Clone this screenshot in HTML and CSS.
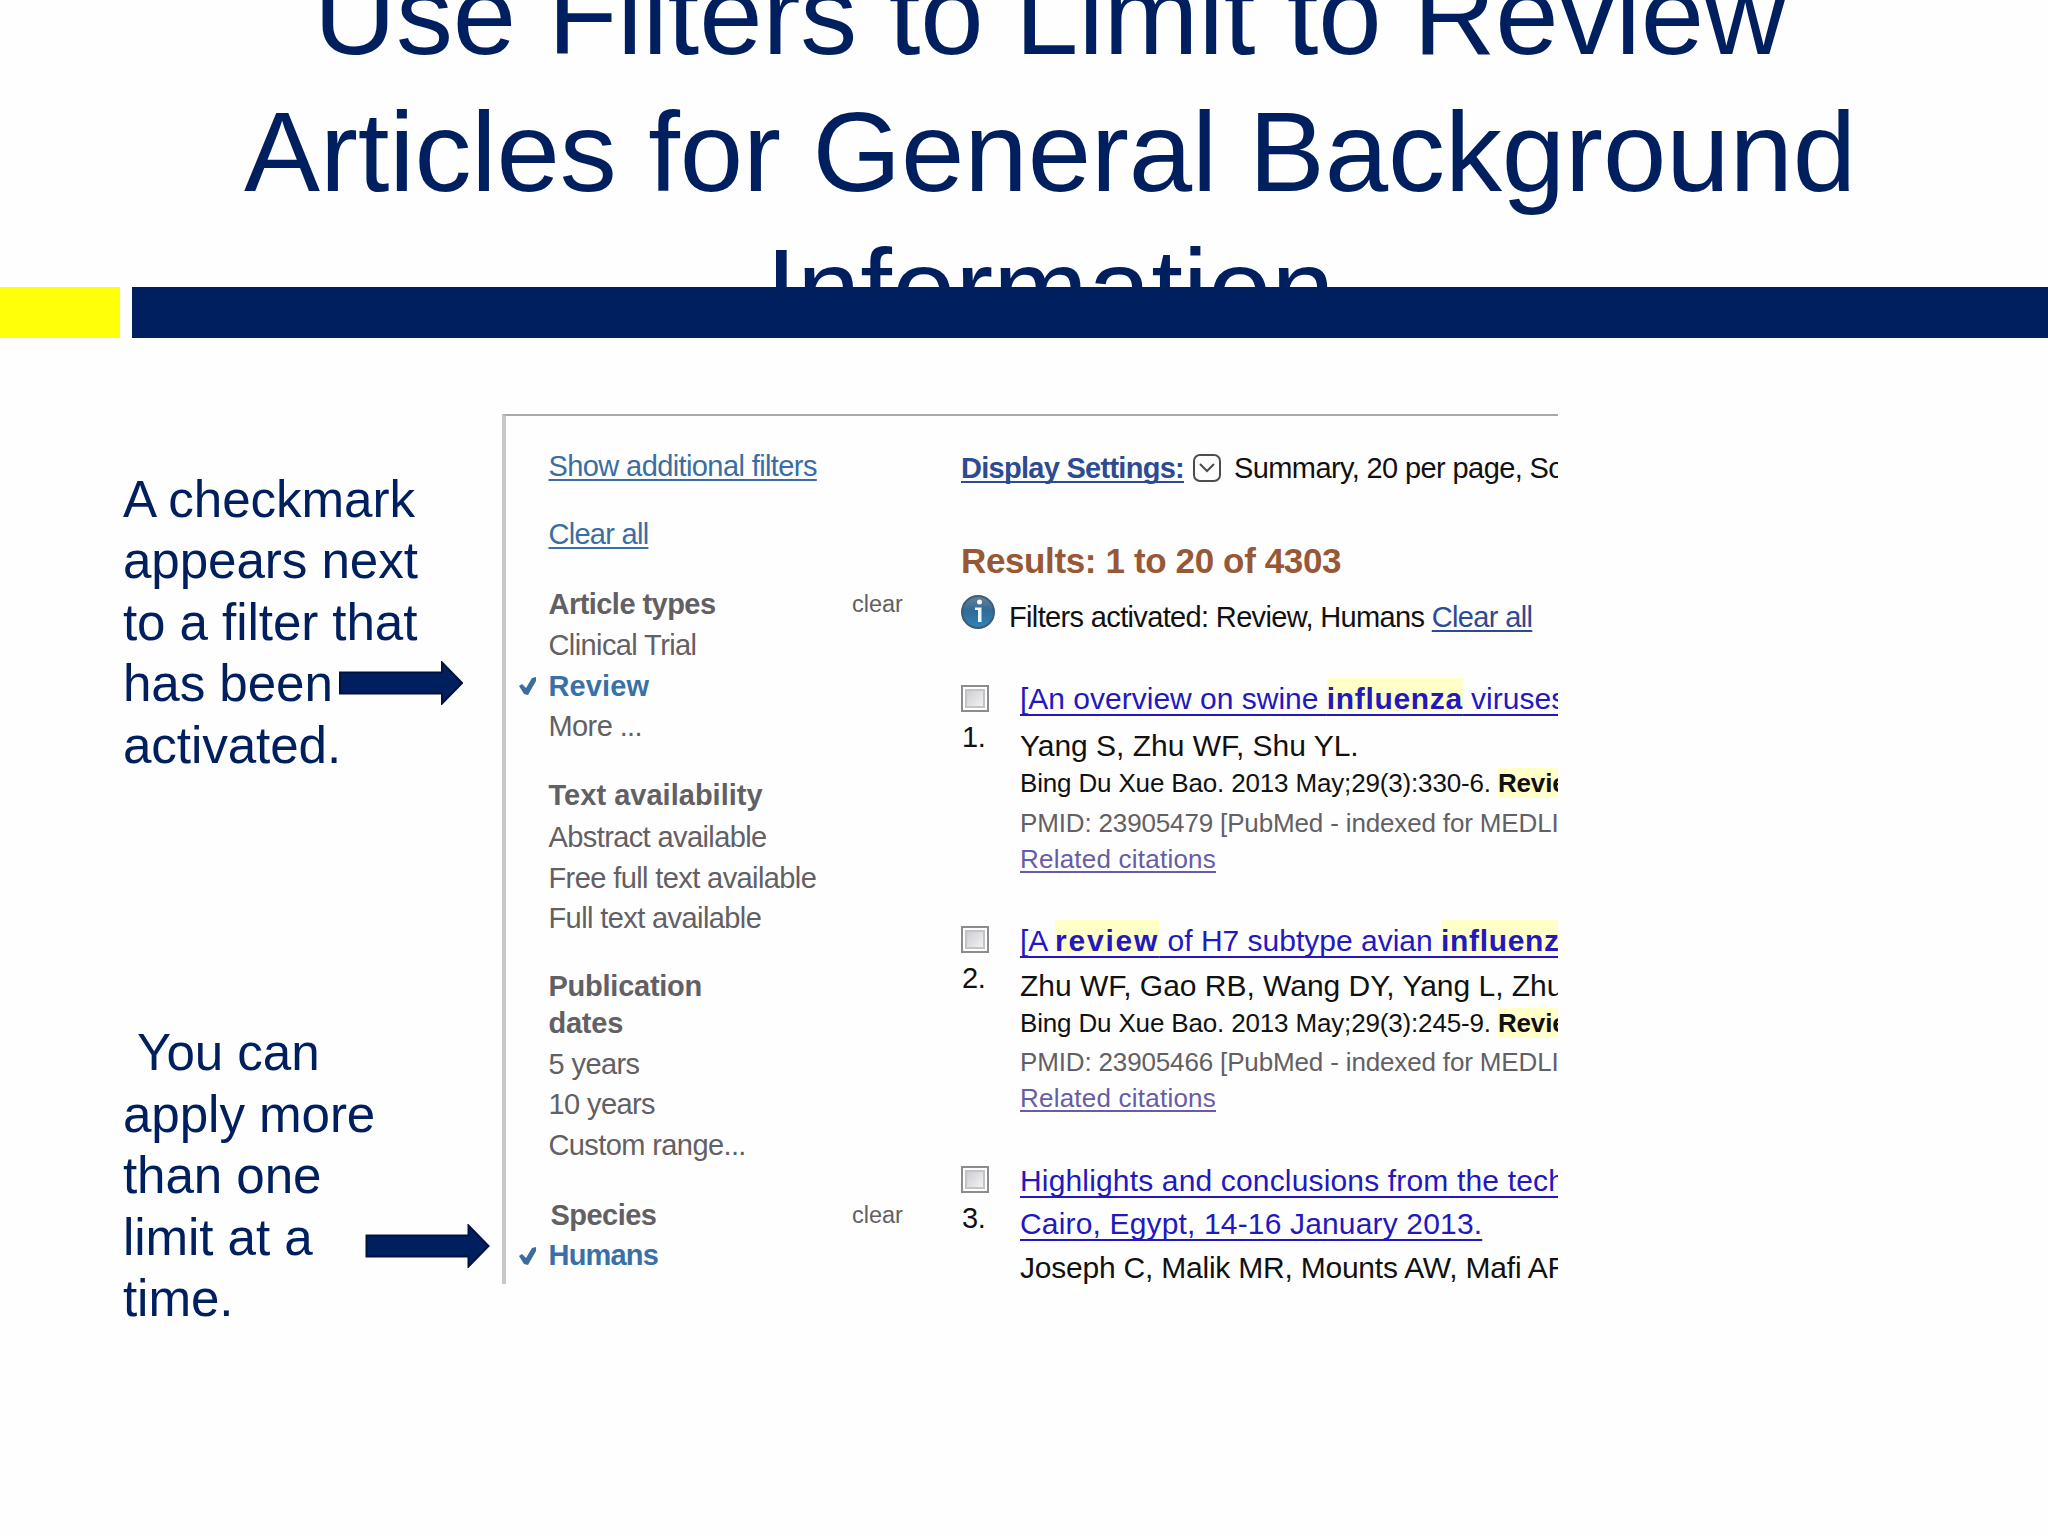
FILE: index.html
```
<!DOCTYPE html>
<html lang="en">
<head>
    <meta charset="UTF-8">
    <meta name="viewport" content="width=device-width, initial-scale=1.0">
    <title>Use Filters to Limit to Review Articles</title>
    <link rel="stylesheet" href="styles.css">
</head>
<body>
    <header class="slide-header">
        <h1>Use Filters to Limit to Review<br>Articles for General Background<br>Information</h1>
    </header>
    <div class="divider">
        <div class="divider-accent"></div>
        <div class="divider-bar"></div>
    </div>

    <main class="slide-body">
        <div class="notes">
            <p class="note">A checkmark<br>appears next<br>to a filter that<br>has been<svg class="arrow arrow-review" width="124" height="44" viewBox="0 0 124 44"><path d="M1 11.500H103V1.500L123 22L103 42.500V32.500H1Z"/></svg><br>activated.</p>
            <p class="note">&nbsp;You can<br>apply more<br>than one<br>limit at a<svg class="arrow arrow-humans" width="125" height="44" viewBox="0 0 124 44"><path d="M1 11.500H103V1.500L123 22L103 42.500V32.500H1Z"/></svg><br>time.</p>
        </div>

        <div class="pubmed">
            <aside class="filters">
                <a class="filter-link" href="#">Show additional filters</a>
                <a class="filter-link clear-all" href="#">Clear all</a>

                <section class="group types">
                    <div class="group-head"><h2>Article types</h2><span class="clear">clear</span></div>
                    <ul>
                        <li>Clinical Trial</li>
                        <li class="active review"><svg class="check" width="18" height="19" viewBox="0 0 18 19"><path d="M0 9L3 7L7 11L13 1L17 0L17 4L9 18L5 17Z"/></svg>Review</li>
                        <li>More ...</li>
                    </ul>
                </section>

                <section class="group text">
                    <div class="group-head"><h2>Text availability</h2></div>
                    <ul>
                        <li>Abstract available</li>
                        <li>Free full text available</li>
                        <li>Full text available</li>
                    </ul>
                </section>

                <section class="group dates">
                    <div class="group-head"><h2>Publication<br>dates</h2></div>
                    <ul>
                        <li>5 years</li>
                        <li>10 years</li>
                        <li>Custom range...</li>
                    </ul>
                </section>

                <section class="group species">
                    <div class="group-head"><h2>Species</h2><span class="clear">clear</span></div>
                    <ul>
                        <li class="active"><svg class="check" width="18" height="19" viewBox="0 0 18 19"><path d="M0 9L3 7L7 11L13 1L17 0L17 4L9 18L5 17Z"/></svg>Humans</li>
                    </ul>
                </section>
            </aside>

            <div class="results">
                <div class="settings">
                    <a href="#">Display Settings:</a>
                    <svg class="dropdown" width="28" height="28" viewBox="0 0 28 28"><rect x="1" y="1" width="26" height="26" rx="6"/><path d="M7 10L14 17L21 10"/></svg>
                    <span>Summary, 20 per page, So</span>
                </div>

                <h2 class="count">Results: 1 to 20 of 4303</h2>

                <div class="activated">
                    <svg class="info" width="34" height="34" viewBox="0 0 34 34">
                        <defs>
                            <linearGradient id="infoFill" x1="0" y1="0" x2="0" y2="1">
                                <stop offset="0" stop-color="#6a8093"/>
                                <stop offset="0.45" stop-color="#2f6a99"/>
                                <stop offset="1" stop-color="#2f86b8"/>
                            </linearGradient>
                        </defs>
                        <circle cx="17" cy="17" r="16" fill="url(#infoFill)" stroke="#3f5c74" stroke-width="2"/>
                        <circle cx="18.500" cy="7" r="2.500" fill="#f4f6f8"/>
                        <path d="M14 12.500H20.500V27H17V15H14Z" fill="#f4f6f8"/>
                    </svg>
                    <span>Filters activated: Review, Humans <a href="#">Clear all</a></span>
                </div>

                <article class="result">
                    <div class="pick"><span class="box"></span><span class="num">1.</span></div>
                    <div>
                        <a class="title" href="#">[An overview on swine <mark>influenza</mark> viruses</a>
                        <p class="authors">Yang S, Zhu WF, Shu YL.</p>
                        <p class="journal">Bing Du Xue Bao. 2013 May;29(3):330-6. <mark>Review</mark></p>
                        <p class="pmid">PMID: 23905479 [PubMed - indexed for MEDLINE]</p>
                        <a class="related" href="#">Related citations</a>
                    </div>
                </article>

                <article class="result">
                    <div class="pick"><span class="box"></span><span class="num">2.</span></div>
                    <div>
                        <a class="title" href="#">[A <mark class="wide">review</mark> of H7 subtype avian <mark>influenza</mark></a>
                        <p class="authors">Zhu WF, Gao RB, Wang DY, Yang L, Zhu</p>
                        <p class="journal">Bing Du Xue Bao. 2013 May;29(3):245-9. <mark>Review</mark></p>
                        <p class="pmid">PMID: 23905466 [PubMed - indexed for MEDLINE]</p>
                        <a class="related" href="#">Related citations</a>
                    </div>
                </article>

                <article class="result">
                    <div class="pick"><span class="box"></span><span class="num">3.</span></div>
                    <div>
                        <a class="title loose" href="#">Highlights and conclusions from the tech<br>Cairo, Egypt, 14-16 January 2013.</a>
                        <p class="authors tight">Joseph C, Malik MR, Mounts AW, Mafi AR</p>
                    </div>
                </article>
            </div>
        </div>
    </main>
</body>
</html>
```
FILE: styles.css
```
* { margin: 0; padding: 0; box-sizing: border-box; }
body {
    width: 2048px;
    height: 1536px;
    overflow: hidden;
    background: #fefefe;
    color: #001f5f;
    font-family: "Liberation Sans", Arial, sans-serif;
    white-space: nowrap;
}
ul {
    list-style: none;
}
a {
    text-decoration: underline;
    text-decoration-thickness: 2px;
    text-decoration-skip-ink: none;
    text-underline-offset: 3px;
}

/* Title and divider */
.slide-header {
    height: 287px;
    padding-left: 52px;
    overflow: hidden;
}
.slide-header h1 {
    margin-top: -53px;
    font-size: 114px;
    font-weight: normal;
    letter-spacing: -0.12px;
    line-height: 136.8px;
    text-align: center;
}
.divider {
    display: flex;
    gap: 12px;
    height: 51px;
}
.divider-accent {
    width: 120px;
    background: #ffff0a;
}
.divider-bar {
    flex: 1;
    background: #001f5f;
}

.slide-body {
    display: flex;
}

/* Notes on the left */
.notes {
    flex-shrink: 0;
    width: 502px;
    padding: 131px 0 0 123px;
}
.note {
    margin-bottom: 246px;
    font-size: 51.2px;
    letter-spacing: -0.1px;
    line-height: 61.44px;
}
.arrow {
    fill: #001f5f;
    stroke: #00123f;
    stroke-width: 2;
}
.arrow-review {
    margin: 0 0 -4px 6px;
}
.arrow-humans {
    margin: 0 0 -13px 52px;
}

/* PubMed panel */
.pubmed {
    display: flex;
    width: 1056px;
    height: 870px;
    margin-top: 76px;
    overflow: hidden;
    border-top: 2px solid #aba7af;
    border-left: 4px solid #c8c5cb;
    font-size: 29px;
}
.filters {
    flex-shrink: 0;
    width: 455px;
    padding: 30px 0 0 42.5px;
    color: #626064;
    letter-spacing: -0.6px;
}
.filter-link {
    display: block;
    width: max-content;
    color: #3a6da3;
    line-height: 40.4px;
}
.clear-all {
    margin-top: 27.5px;
    letter-spacing: -0.72px;
}
.group {
    margin-top: 27.5px;
}
.group.types {
    margin-top: 30px;
}
.group-head {
    display: flex;
}
.group h2 {
    width: 303.5px;
    font-size: 29px;
    letter-spacing: -0.54px;
    line-height: 41px;
}
.clear {
    font-size: 23.5px;
    letter-spacing: 0;
    line-height: 41px;
}
.group li {
    display: flex;
    align-items: center;
    height: 40.5px;
}
.text h2 {
    padding-bottom: 0.5px;
    letter-spacing: 0.02px;
    line-height: 42.5px;
}
.group.dates {
    margin-top: 29.5px;
}
.dates h2 {
    padding-bottom: 2.5px;
    letter-spacing: -0.25px;
    line-height: 36.6px;
}
.group.species {
    margin-top: 29px;
}
.species h2 {
    padding-left: 2px;
}
.group .active {
    color: #3a70a8;
    font-weight: bold;
}
.species .active {
    letter-spacing: -0.8px;
}
.group .review {
    letter-spacing: 0.1px;
}
.check {
    margin: 1px 12px 0 -30px;
    fill: #3a6d9f;
}

/* Results */
.results {
    flex: 1;
    min-width: 0;
    padding-top: 32px;
    color: #111;
}
.settings {
    display: flex;
    align-items: center;
    height: 40px;
    letter-spacing: -0.61px;
}
.settings a {
    color: #2d4b92;
    font-weight: bold;
    letter-spacing: -0.72px;
}
.dropdown {
    flex-shrink: 0;
    margin: 0 13px 0 9px;
    fill: none;
    stroke: #4c4c4c;
    stroke-width: 2;
}
.count {
    margin-top: 51px;
    color: #985735;
    font-size: 35px;
    letter-spacing: -0.37px;
    line-height: 44px;
}
.activated {
    display: flex;
    gap: 14px;
    margin-top: 12px;
    height: 40px;
    line-height: 45px;
    letter-spacing: -0.65px;
}
.activated a {
    color: #2d4b92;
}
.result {
    display: flex;
    margin-top: 42.2px;
}
.pick {
    flex-shrink: 0;
    width: 59px;
    padding-top: 7.5px;
}
.box {
    display: block;
    width: 28px;
    height: 27px;
    padding: 3px;
    border: 2px solid #8c8c8e;
    outline: 2px solid #c4c4c6;
    outline-offset: -6px;
    background: linear-gradient(135deg, #c9ccd2, #f4f4f4) content-box #fff;
}
.num {
    display: block;
    margin: 10px 0 0 1px;
    letter-spacing: -0.5px;
    line-height: 30px;
}
.title {
    display: block;
    width: max-content;
    color: #2318c0;
    font-size: 30px;
    letter-spacing: 0;
    line-height: 43px;
    text-underline-offset: 5px;
}
.title.loose {
    letter-spacing: 0.16px;
}
mark {
    color: inherit;
    background: #ffffc8;
    font-weight: bold;
}
.title mark {
    padding-top: 4px;
    background: linear-gradient(#ffffc8, #ffffc8) 0 0 / 100% calc(100% - 4px) no-repeat;
    letter-spacing: 0.66px;
}
.title .wide {
    letter-spacing: 1.8px;
}
.authors {
    margin-top: 4px;
    font-size: 30px;
    letter-spacing: -0.02px;
    line-height: 40px;
}
.activated + .result .authors {
    margin-top: 6px;
}
.authors.tight {
    margin-top: 3px;
    letter-spacing: -0.22px;
}
.journal {
    font-size: 26px;
    letter-spacing: -0.16px;
    line-height: 34px;
}
.pmid {
    margin-top: 4.5px;
    color: #626064;
    font-size: 26px;
    letter-spacing: -0.15px;
    line-height: 36px;
}
.related {
    display: block;
    width: max-content;
    color: #665ca8;
    font-size: 26px;
    letter-spacing: 0.22px;
    line-height: 36px;
}
```
